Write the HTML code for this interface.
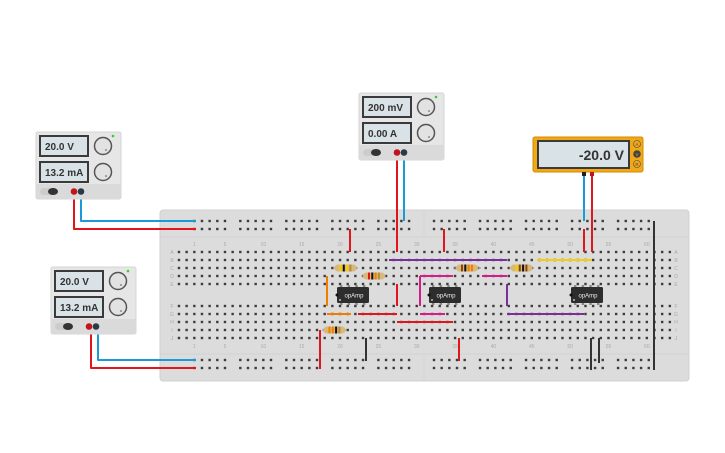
<!DOCTYPE html>
<html><head><meta charset="utf-8"><style>
body{margin:0;background:#fff;width:725px;height:453px;overflow:hidden;font-family:"Liberation Sans",sans-serif}
svg{position:absolute;left:0;top:0}
</style></head><body>
<svg id="s" width="725" height="453" viewBox="0 0 725 453" font-family="Liberation Sans, sans-serif">
<rect x="160" y="210" width="529" height="171" rx="3" fill="#dcdcdc" stroke="#d0d0d0"/>
<line x1="160" y1="237" x2="689" y2="237" stroke="#cfcfcf" stroke-width="0.7"/>
<line x1="160" y1="354" x2="689" y2="354" stroke="#cfcfcf" stroke-width="0.7"/>
<line x1="424" y1="212" x2="424" y2="236" stroke="#cfcfcf" stroke-width="0.7"/>
<line x1="424" y1="356" x2="424" y2="380" stroke="#cfcfcf" stroke-width="0.7"/>
<g id="holes" fill="#3c3c3c"></g>
<g id="lab" fill="#aaa" font-size="5"></g>
</svg>
<script>
const s=document.getElementById('s'),H=document.getElementById('holes'),L=document.getElementById('lab');
const NS='http://www.w3.org/2000/svg';
function el(t,a,p){const e=document.createElementNS(NS,t);for(const k in a)e.setAttribute(k,a[k]);(p||s).appendChild(e);return e}
const P=7.67,X0=194.3;
function hole(x,y){el('rect',{x:x-1.2,y:y-1.2,width:2.4,height:2.4},H)}
const rows=[252,260,268,276,284,306,314,322,330,338];
for(const y of rows)for(let n=-2;n<=62;n++)hole(X0+n*P,y);
const rails=[221,229,360,368];
const gs=[];for(let k=0;k<5;k++)gs.push(X0+6*k*P);for(let k=0;k<5;k++)gs.push(434+6*k*P);
for(const y of rails)for(const g of gs)for(let i=0;i<5;i++)hole(g+i*P,y);
const letters='ABCDEFGHIJ';
rows.forEach((y,i)=>{el('text',{x:172,y:y+2,'text-anchor':'middle'},L).textContent=letters[i];el('text',{x:676,y:y+2,'text-anchor':'middle'},L).textContent=letters[i];});
for(const c of [1,5,10,15,20,25,30,35,40,45,50,55,60]){const x=X0+(c-1)*P;for(const y of [246,348])el('text',{x:x,y:y,'text-anchor':'middle'},L).textContent=c;}
function w(pts,c,sw){el('polyline',{points:pts,fill:'none',stroke:c,'stroke-width':sw||2,'stroke-linejoin':'round'})}
const R='#e0161b',B='#1a9ad6',K='#333',O='#f07d00',M='#d81b8c',V='#7b2d9a',Y='#f5d000';
w('74,194 74,229 196,229',R,2);w('81,194 81,221 196,221',B,2);
w('91,328 91,368 196,368',R,2);w('98,328 98,360 196,360',B,2);
w('397,156 397,252',R,2);w('404,156 404,221',B,2);
w('584,173 584,221',B,2);w('592,173 592,252',R,2);w('584,229 584,252',R,2);
w('350,229 350,252',R);w('444,229 444,252',R);
w('389,260 507,260',V);w('537,260 592,260',Y);
w('327,276 327,306',O);w('327,314 351,314',O);
w('358,314 397,314',R);w('397,284 397,306',R);
w('420,276 420,306',M);w('420,276 453,276',M);w('420,314 445,314',M);
w('397,322 453,322',R);w('482,276 507,276',M);
w('507,284 507,306',V);w('507,314 584,314',V);
w('320,330 320,369',R);w('366,338 366,361',K);w('459,338 459,361',R);
w('591,338 591,370',K);w('599,338 599,363',K);w('654,221 654,370',K);
function res(x1,x2,y,bands){el('line',{x1:x1,y1:y,x2:x2,y2:y,stroke:'#999','stroke-width':1.2});
const bx=(x1+x2)/2-11;el('rect',{x:bx,y:y-3.5,width:22,height:7,rx:3.5,fill:'#d9b87a'});
bands.forEach((c,i)=>el('rect',{x:bx+5+i*3.3,y:y-3.5,width:2,height:7,fill:c}));}
res(333,358,268,['#f5d000','#111','#f5d000','#b58a3c']);
res(362,386,276,['#e0161b','#111','#f07d00','#b58a3c']);
res(453,481,268,['#8b4513','#111','#f07d00','#f07d00']);
res(509,534,268,['#f5d000','#8b4513','#111','#8b4513']);
res(322,347,330,['#f07d00','#f07d00','#111','#b58a3c']);
function op(x){for(let i=0;i<4;i++){el('rect',{x:x+3+i*P,y:285,width:2.4,height:3,fill:'#888'});el('rect',{x:x+3+i*P,y:302,width:2.4,height:3,fill:'#888'});}
el('rect',{x:x,y:287,width:32,height:16,rx:1.5,fill:'#2d2d2d'});
el('circle',{cx:x,cy:295,r:1.5,fill:'#111'});el('circle',{cx:x+3,cy:300,r:0.9,fill:'#eee'});
const t=el('text',{x:x+17,y:297.5,'font-size':6,fill:'#eee','text-anchor':'middle'});t.textContent='opAmp';}
op(337);op(429);op(571);
function ps(x,y,t1,t2){el('rect',{x:x,y:y,width:85,height:67,rx:2,fill:'#e6e6e6',stroke:'#d4d4d4'});
el('rect',{x:x,y:y+52,width:85,height:15,fill:'#dadada'});
[[y+3,t1],[y+29,t2]].forEach(([yy,t])=>{el('rect',{x:x+3,y:yy,width:50,height:22,fill:'#3a3a3a'});
el('rect',{x:x+5,y:yy+2,width:46,height:18,fill:'#d9e2e6'});
const tt=el('text',{x:x+9,y:yy+15,'font-size':10,'font-weight':'bold',fill:'#333'});tt.textContent=t;
el('circle',{cx:x+67,cy:yy+11,r:8.5,fill:'#e2e2e2',stroke:'#555','stroke-width':1.5});
el('circle',{cx:x+70,cy:yy+15,r:0.8,fill:'#555'});});
el('circle',{cx:x+77,cy:y+4,r:1.3,fill:'#3c3'});
el('rect',{x:x+4,y:y+56,width:18,height:7,rx:3.5,fill:'#ccc'});el('ellipse',{cx:x+17,cy:y+59.5,rx:5,ry:3.5,fill:'#333'});
el('circle',{cx:x+38,cy:y+59.5,r:3.3,fill:'#c0161b'});el('circle',{cx:x+45,cy:y+59.5,r:3.3,fill:'#2a3a48'});}
ps(36,132,'20.0 V','13.2 mA');ps(51,267,'20.0 V','13.2 mA');ps(359,93,'200 mV','0.00 A');
el('rect',{x:533,y:137,width:110,height:35,rx:2,fill:'#f0a818',stroke:'#d08c00'});
el('rect',{x:537,y:140,width:93,height:29,fill:'#3a3a3a'});el('rect',{x:539,y:142,width:89,height:25,fill:'#d9e2e6'});
const mt=el('text',{x:624,y:160,'font-size':14,'font-weight':'bold',fill:'#333','text-anchor':'end'});mt.textContent='-20.0 V';
[['A',144],['V',154],['R',164]].forEach(([c,cy],i)=>{el('circle',{cx:637,cy:cy,r:3.5,fill:i==1?'#444':'#f0a818',stroke:'#444','stroke-width':0.6});
const t=el('text',{x:637,y:cy+1.8,'font-size':4.5,fill:i==1?'#f0a818':'#444','text-anchor':'middle'});t.textContent=c;});
el('rect',{x:582,y:172,width:4,height:4,fill:'#222'});el('rect',{x:590,y:172,width:4,height:4,fill:'#c0161b'});
</script>
</body></html>
